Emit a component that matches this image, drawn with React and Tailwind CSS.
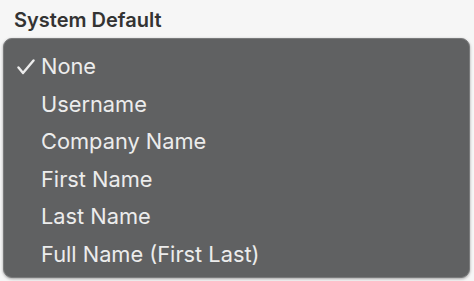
export default function App() {
  const items = ['None', 'Username', 'Company Name', 'First Name', 'Last Name', 'Full Name (First Last)']

  return (
    <div className="w-[474px] h-[281px] overflow-hidden bg-[#f6f6f6] font-['Inter',sans-serif]">
      <div className="pl-[14px] pt-[9px] h-[38px] text-[20px] leading-[23px] font-semibold text-[#333333]">
        System Default
      </div>
      <div className="ml-[3px] mr-[4px] h-[240px] rounded-[9px] bg-[#606162] border border-[#7a7b7c] shadow-[0_1px_3px_rgba(0,0,0,0.35)] pt-[9px]">
        {items.map((item, i) => (
          <div key={item} className="flex items-center h-[37.5px] text-[21.8px] text-[#ececec]">
            <span className="w-[37px] pl-[13px] flex items-center">
              {i === 0 && (
                <svg width="18" height="16" viewBox="0 0 18 16" fill="none">
                  <path d="M1.5 8.5 L6 14 L16.5 1.5" stroke="#ececec" strokeWidth="2.4" strokeLinecap="round" strokeLinejoin="round" />
                </svg>
              )}
            </span>
            <span>{item}</span>
          </div>
        ))}
      </div>
    </div>
  )
}
